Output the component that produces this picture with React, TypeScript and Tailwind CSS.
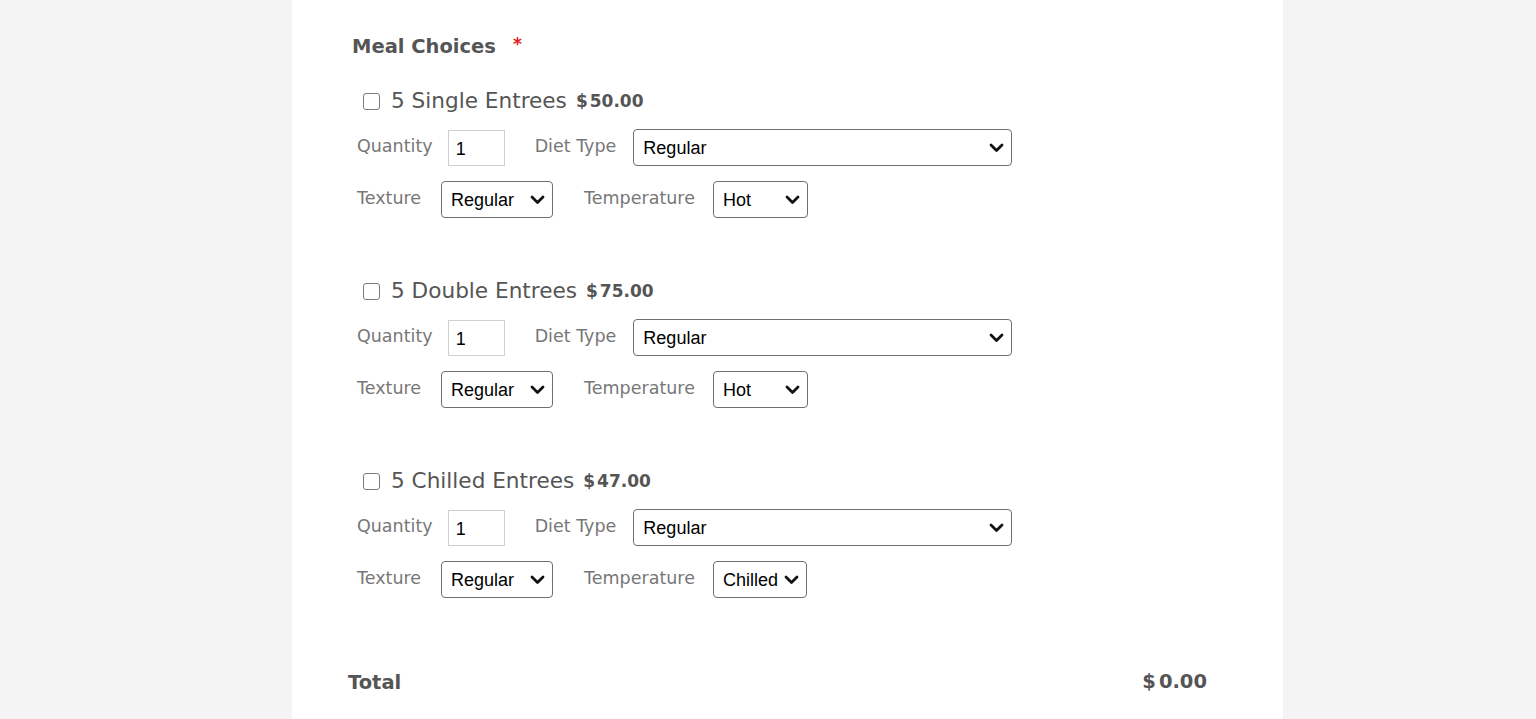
import React from "react";

const Chevron = () => (
  <svg width="15" height="10" viewBox="0 0 15 10" className="pointer-events-none absolute right-[7px] top-1/2 -translate-y-1/2">
    <path d="M2 2 L7.5 7.5 L13 2" fill="none" stroke="#111" strokeWidth="2.8" strokeLinecap="round" strokeLinejoin="round" />
  </svg>
);

function Select({ value, width }: { value: string; width: string }) {
  return (
    <div className={`relative h-[37px] ${width} shrink-0 rounded-[4px] border border-[#6f6f6f] bg-white`}>
      <div className="flex h-full items-center pl-[9px] pt-[2px] text-[18px] text-black [font-family:'Liberation_Sans',Arial,sans-serif]">
        {value}
      </div>
      <Chevron />
    </div>
  );
}

function Entry({ name, price, temp, tempWidth }: { name: string; price: string; temp: string; tempWidth: string }) {
  return (
    <div className="flex flex-col">
      <div className="flex h-[30px] items-center pl-[71px]">
        <div className="h-[17px] w-[17px] rounded-[3px] border border-[#7a7a7a] bg-white" />
        <span className="ml-[11px] text-[21.6px] text-[#555]">{name}</span>
        <span className="ml-[9px] pt-[2px] text-[17px] font-bold text-[#555]">
          $<span className="ml-[2px]">{price}</span>
        </span>
      </div>
      <div className="mt-[13px] flex h-[37px] items-center pl-[65px] text-[17.5px] text-[#777]">
        <span className="-mt-[3px]">Quantity</span>
        <div className="ml-[15px] flex h-[36px] w-[57px] items-center border border-[#cfcfcf] bg-white pl-[7px] pt-[3px] text-[18px] text-black [font-family:'Liberation_Sans',Arial,sans-serif]">
          1
        </div>
        <span className="-mt-[3px] ml-[30px]">Diet Type</span>
        <div className="ml-[17px]">
          <Select value="Regular" width="w-[379px]" />
        </div>
      </div>
      <div className="mt-[15px] flex h-[37px] items-center pl-[65px] text-[17.5px] text-[#777]">
        <span className="-mt-[3px]">Texture</span>
        <div className="ml-[20px]">
          <Select value="Regular" width="w-[112px]" />
        </div>
        <span className="-mt-[3px] ml-[31px]">Temperature</span>
        <div className="ml-[18px]">
          <Select value={temp} width={tempWidth} />
        </div>
      </div>
    </div>
  );
}

export default function App() {
  return (
    <div className="min-h-[719px] w-full bg-[#f4f4f4] [font-family:'DejaVu_Sans',sans-serif]">
      <div className="ml-[292px] min-h-[719px] w-[991px] bg-white pb-[40px] pt-[35px]">
        <div className="flex h-[24px] items-center pl-[60px]">
          <span className="text-[19.5px] font-bold text-[#555]">Meal Choices</span>
          <span className="ml-[17px] -mt-[4px] text-[17px] font-bold text-[#e02020]">*</span>
        </div>
        <div className="mt-[27px] flex flex-col gap-[58px]">
          <Entry name="5 Single Entrees" price="50.00" temp="Hot" tempWidth="w-[95px]" />
          <Entry name="5 Double Entrees" price="75.00" temp="Hot" tempWidth="w-[95px]" />
          <Entry name="5 Chilled Entrees" price="47.00" temp="Chilled" tempWidth="w-[94px]" />
        </div>
        <div className="mt-[73px] flex h-[24px] items-center justify-between pl-[56px] pr-[76px] font-bold text-[#555]">
          <span className="text-[19.5px]">Total</span>
          <span className="-mt-[2px] text-[19.5px]">
            $<span className="ml-[3px]">0.00</span>
          </span>
        </div>
      </div>
    </div>
  );
}
